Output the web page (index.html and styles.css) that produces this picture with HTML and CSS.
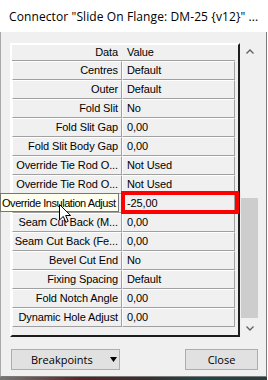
FILE: index.html
```html
<!DOCTYPE html>
<html>
<head>
<meta charset="utf-8">
<link rel="stylesheet" href="styles.css">
</head>
<body>
<div class="window">
  <div class="titlebar"><span class="title">Connector "Slide On Flange: DM-25 {v12}" ...</span></div>
  <div class="client">
    <div class="gridrow">
      <div class="grid">
        <div class="row header"><div class="cell label">Data</div><div class="cell value">Value</div></div>
        <div class="row"><div class="cell label">Centres</div><div class="cell value">Default</div></div>
        <div class="row"><div class="cell label">Outer</div><div class="cell value">Default</div></div>
        <div class="row"><div class="cell label">Fold Slit</div><div class="cell value">No</div></div>
        <div class="row"><div class="cell label">Fold Slit Gap</div><div class="cell value">0,00</div></div>
        <div class="row"><div class="cell label">Fold Slit Body Gap</div><div class="cell value">0,00</div></div>
        <div class="row"><div class="cell label">Override Tie Rod O...</div><div class="cell value">Not Used</div></div>
        <div class="row"><div class="cell label">Override Tie Rod O...</div><div class="cell value">Not Used</div></div>
        <div class="row active">
          <div class="cell label"></div><div class="cell value">-25,00</div>
          <div class="tip">Override Insulation Adjust</div>
          <div class="hl"></div>
          <svg class="cursor" width="13" height="20" viewBox="0 0 13 20"><path d="M0.5 0.5 L0.5 16 L4.3 12.4 L6.8 18.3 L9.2 17.3 L6.7 11.5 L11.6 11.5 Z" fill="#fff" stroke="#000" stroke-width="1" stroke-linejoin="miter"/></svg>
        </div>
        <div class="row"><div class="cell label">Seam Cut Back (M...</div><div class="cell value">0,00</div></div>
        <div class="row"><div class="cell label">Seam Cut Back (Fe...</div><div class="cell value">0,00</div></div>
        <div class="row"><div class="cell label">Bevel Cut End</div><div class="cell value">No</div></div>
        <div class="row"><div class="cell label">Fixing Spacing</div><div class="cell value">Default</div></div>
        <div class="row"><div class="cell label">Fold Notch Angle</div><div class="cell value">0,00</div></div>
        <div class="row"><div class="cell label">Dynamic Hole Adjust</div><div class="cell value">0,00</div></div>
      </div>
      <div class="scrollbar">
        <div class="sarrow"><svg width="8" height="5" viewBox="0 0 8 5"><polyline points="0.5,4.5 4,1 7.5,4.5" fill="none" stroke="#606060" stroke-width="1.3"/></svg></div>
        <div class="track"><div class="thumb"></div></div>
        <div class="sarrow"><svg width="8" height="5" viewBox="0 0 8 5"><polyline points="0.5,0.5 4,4 7.5,0.5" fill="none" stroke="#606060" stroke-width="1.3"/></svg></div>
      </div>
    </div>
    <div class="buttons">
      <button class="btn bp"><span>Breakpoints</span><svg class="caret" width="7" height="5" viewBox="0 0 7 5"><polygon points="0,0 7,0 3.5,5" fill="#000"/></svg></button>
      <button class="btn close">Close</button>
    </div>
  </div>
  <div class="desktop"></div>
</div>
</body>
</html>
```
FILE: styles.css
```css
* { box-sizing: border-box; }
html, body { margin: 0; padding: 0; background: #fff; }
body { width: 268px; height: 380px; overflow: hidden; font-family: "Liberation Sans", Arial, sans-serif; }

.window { width: 267px; }

.titlebar {
  height: 32px;
  background: #fff;
  display: flex;
  align-items: center;
  padding: 1px 0 0 9px;
  font-family: "Open Sans", "Noto Sans", sans-serif;
  font-size: 12px;
  letter-spacing: 0.1px;
  color: #000;
  white-space: nowrap;
  overflow: hidden;
}

.client {
  height: 345px;
  background: #f0f0f0;
  border-left: 1px solid #a8a8a8;
  border-right: 1px solid #7a7a7a;
  border-bottom: 1px solid #7a7a7a;
  padding: 11px 0 0 9px;
}

.gridrow { display: flex; height: 294px; }

.grid {
  position: relative;
  width: 230px;
  height: 294px;
  border: 2px solid;
  border-color: #fff #1e1e1e #1e1e1e #fff;
}

.row { position: relative; display: flex; height: 19px; width: 223px; }
.row.header { height: 16px; }

.cell {
  display: flex;
  align-items: center;
  border-top: 1px solid #fff;
  border-left: 1px solid #fff;
  border-right: 1px solid #a0a0a0;
  border-bottom: 1px solid #a0a0a0;
  font-size: 11px;
  letter-spacing: -0.1px;
  line-height: 1;
  color: #000;
  white-space: nowrap;
  overflow: hidden;
}
.label { width: 110px; justify-content: flex-end; padding-right: 3px; }
.value { width: 113px; padding-left: 4px; }
.header .cell { border-top: none; border-left: none; border-right: none; }
.header .label { padding-right: 4px; }
.header .value { padding-left: 5px; }

.tip {
  position: absolute;
  left: -12px;
  top: -1px;
  width: 119px;
  height: 19px;
  display: flex;
  align-items: center;
  padding-left: 1px;
  background: #ffffef;
  border: 1px solid #767676;
  font-size: 11px;
  letter-spacing: -0.45px;
  white-space: nowrap;
  overflow: hidden;
  z-index: 2;
}
.hl {
  position: absolute;
  left: 109px;
  top: -3px;
  width: 118px;
  height: 23px;
  border: 4px solid #ff0000;
  z-index: 2;
}
.cursor { position: absolute; left: 47px; top: 10px; z-index: 3; }

.scrollbar { width: 19px; height: 294px; display: flex; flex-direction: column; padding: 0 1px; }
.sarrow { height: 17px; display: flex; align-items: center; justify-content: center; }
.track { flex: 1; }
.thumb { margin-top: 138px; height: 120px; background: #cdcdcd; }

.buttons { display: flex; justify-content: space-between; margin-top: 12px; padding: 0 8px 0 1px; }
.btn {
  height: 21px;
  margin: 0;
  background: #e1e1e1;
  border: 1px solid #adadad;
  border-radius: 0;
  font-family: "Open Sans", "Noto Sans", sans-serif;
  font-size: 11px;
  color: #000;
  padding: 0;
}
.bp { width: 109px; display: flex; align-items: center; justify-content: space-between; padding: 0 2px 0 19px; }
.close { width: 73px; }

.desktop {
  height: 3px;
  background: linear-gradient(to right, #777 0, #5a2424 30%, #3a2e2e 55%, #1f4747 75%, #2c3a3a 100%);
}
```
